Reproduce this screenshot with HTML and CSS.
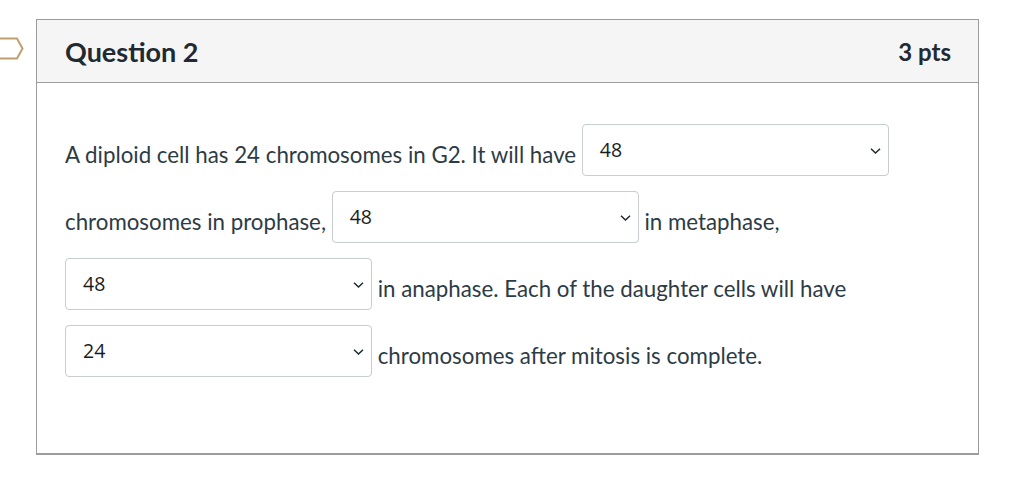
FILE: index.html
```html
<!DOCTYPE html>
<html>
<head>
<meta charset="utf-8">
<link rel="stylesheet" href="styles.css">
</head>
<body>
<div class="page">
  <div class="card">
    <svg class="flag" width="26" height="24" viewBox="0 0 26 24" aria-hidden="true">
      <path d="M-3 1.5 H17 L22.5 11.5 L17 21.5 H-3" fill="none" stroke="#bfa06e" stroke-width="2" stroke-linejoin="miter"/>
    </svg>
    <div class="card-header">
      <h2 class="title">Question 2</h2>
      <span class="pts">3 pts</span>
    </div>
    <div class="card-body">
      <p class="question">A diploid cell has 24 chromosomes in G2. It will have <span class="select"><span class="val">48</span><svg class="chev" width="11" height="6" viewBox="0 0 11 6"><path d="M1 0.8 L5.5 5 L10 0.8" fill="none" stroke="#1f2a33" stroke-width="1.5"/></svg></span> chromosomes in prophase, <span class="select"><span class="val">48</span><svg class="chev" width="11" height="6" viewBox="0 0 11 6"><path d="M1 0.8 L5.5 5 L10 0.8" fill="none" stroke="#1f2a33" stroke-width="1.5"/></svg></span> in metaphase, <span class="select"><span class="val">48</span><svg class="chev" width="11" height="6" viewBox="0 0 11 6"><path d="M1 0.8 L5.5 5 L10 0.8" fill="none" stroke="#1f2a33" stroke-width="1.5"/></svg></span> in anaphase. Each of the daughter cells will have <span class="select"><span class="val">24</span><svg class="chev" width="11" height="6" viewBox="0 0 11 6"><path d="M1 0.8 L5.5 5 L10 0.8" fill="none" stroke="#1f2a33" stroke-width="1.5"/></svg></span> chromosomes after mitosis is complete.</p>
    </div>
  </div>
</div>
</body>
</html>
```

FILE: styles.css
```css
* { box-sizing: border-box; }
html, body { margin: 0; padding: 0; background: #fff; }
body { font-family: Lato, "Open Sans", sans-serif; color: #2d3b45; }

.page { padding: 19px 0 0 36px; }

.card {
  position: relative;
  width: 943px;
  border: 1px solid #9c9c9c;
  border-bottom-width: 2px;
  background: #fff;
}

.flag {
  position: absolute;
  left: -37px;
  top: 17px;
}

.card-header {
  display: flex;
  align-items: center;
  justify-content: space-between;
  height: 63px;
  padding: 0 27px 0 28px;
  background: #f5f5f5;
  border-bottom: 1px solid #9c9c9c;
}

.title {
  margin: 0;
  font-size: 27px;
  font-weight: 700;
  color: #1f2a33;
}

.pts {
  font-size: 24px;
  font-weight: 700;
  color: #1f2a33;
}

.card-body {
  padding: 34px 28px 68px 28px;
}

.question {
  margin: 0;
  font-size: 22.3px;
  line-height: 24px;
  color: #2d3b45;
}

.select {
  display: inline-flex;
  align-items: center;
  justify-content: space-between;
  width: 307px;
  height: 52px;
  margin: 7px 0 8px;
  padding: 0 7px 0 17px;
  vertical-align: 6px;
  border: 1px solid #c7cdd1;
  border-radius: 4px;
  background: #fff;
}

.val {
  font-family: "Open Sans", "Noto Sans", sans-serif;
  font-size: 19.5px;
  line-height: 24px;
  color: #1a1a1a;
}

.chev { display: block; margin-top: 1px; }
```
